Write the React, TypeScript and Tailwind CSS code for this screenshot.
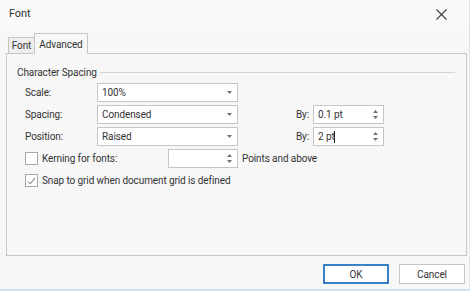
import React from "react";

const Arrow = () => (
  <svg width="5" height="3" viewBox="0 0 5 3" className="shrink-0">
    <path d="M0 0 L5 0 L2.5 3 Z" fill="#707070" />
  </svg>
);

const SpinArrows = () => (
  <div className="flex flex-col gap-[3px] items-center">
    <svg width="5" height="3" viewBox="0 0 5 3">
      <path d="M0 3 L5 3 L2.5 0 Z" fill="#707070" />
    </svg>
    <svg width="5" height="3" viewBox="0 0 5 3">
      <path d="M0 0 L5 0 L2.5 3 Z" fill="#707070" />
    </svg>
  </div>
);

const Combo = ({ value }: { value: string }) => (
  <div className="w-[141px] h-[19px] bg-white border border-[#c6c6c6] flex items-center justify-between pl-[4px] pr-[5px]">
    <span>{value}</span>
    <Arrow />
  </div>
);

const Spin = ({ value, caret, w }: { value: string; caret?: boolean; w: string }) => (
  <div className={`${w} h-[19px] bg-white border border-[#c6c6c6] flex items-center justify-between pl-[4px] pr-[5px]`}>
    <span className="flex items-center">
      {value}
      {caret && <span className="inline-block w-[1px] h-[12px] bg-[#222] ml-[-1px]" />}
    </span>
    <SpinArrows />
  </div>
);

const Check = ({ checked }: { checked?: boolean }) => (
  <div className="w-[13px] h-[13px] bg-white border border-[#a8a8a8] flex items-center justify-center">
    {checked && (
      <svg width="9" height="8" viewBox="0 0 9 8">
        <path d="M1 4.5 L3.3 6.8 L8 1" stroke="#606060" strokeWidth="1" fill="none" />
      </svg>
    )}
  </div>
);

export default function App() {
  return (
    <div
      className="w-[474px] h-[292px] bg-white text-[10px] text-[#333] overflow-hidden tracking-[-0.1px]"
      style={{ fontFamily: 'Roboto, "Noto Sans", sans-serif' }}
    >
      <div className="w-[470px] h-[291px] bg-[#f7f7f7] border-r border-[#dfe6ee] border-b-2 border-b-[#cfe0f1] flex flex-col">
        {/* title bar */}
        <div className="h-[29px] flex items-center justify-between pl-[9px] pr-[22px] bg-[#f9f9f9]">
          <span className="text-[11px] text-[#333]">Font</span>
          <svg width="11" height="11" viewBox="0 0 11 11">
            <path d="M0.5 0.5 L10.5 10.5 M10.5 0.5 L0.5 10.5" stroke="#444" strokeWidth="1.2" />
          </svg>
        </div>
        {/* tabs */}
        <div className="flex items-end pl-[8px] mt-[4px] h-[20px]">
          <div className="h-[16px] w-[26px] border border-b-0 border-r-0 border-[#c6c6c6] bg-[#eeeeee] flex items-center justify-center">
            Font
          </div>
          <div className="h-[21px] w-[54px] border border-b-0 border-[#c6c6c6] bg-[#f7f7f7] flex items-center justify-center mb-[-1px] relative z-10">
            Advanced
          </div>
        </div>
        {/* panel */}
        <div className="ml-[6px] w-[461px] h-[203px] border border-[#c6c6c6] bg-[#f7f7f7] pt-[10px] pl-[10px] pr-[11px]">
          <div className="flex items-center gap-[3px] h-[16px]">
            <span>Character Spacing</span>
            <div className="flex-1 h-px bg-[#d4d4d4]" />
          </div>
          <div className="pl-[8px] mt-[3px] flex flex-col gap-[3px]">
            <div className="flex items-center h-[19px]">
              <span className="w-[72px]">Scale:</span>
              <Combo value="100%" />
            </div>
            <div className="flex items-center h-[19px]">
              <span className="w-[72px]">Spacing:</span>
              <Combo value="Condensed" />
              <span className="w-[75px] text-right pr-[4px]">By:</span>
              <Spin value="0.1 pt" w="w-[71px]" />
            </div>
            <div className="flex items-center h-[19px]">
              <span className="w-[72px]">Position:</span>
              <Combo value="Raised" />
              <span className="w-[75px] text-right pr-[4px]">By:</span>
              <Spin value="2 pt" caret w="w-[71px]" />
            </div>
            <div className="flex items-center h-[19px]">
              <Check />
              <span className="ml-[4px] w-[126px]">Kerning for fonts:</span>
              <Spin value="" w="w-[70px]" />
              <span className="ml-[4px]">Points and above</span>
            </div>
            <div className="flex items-center h-[17px] mt-[1px]">
              <Check checked />
              <span className="ml-[4px]">Snap to grid when document grid is defined</span>
            </div>
          </div>
        </div>
        {/* buttons */}
        <div className="flex justify-end gap-[10px] pr-[4px] mt-[8px]">
          <div className="w-[66px] h-[20px] bg-white border-2 border-[#3b7fc4] flex items-center justify-center">
            OK
          </div>
          <div className="w-[66px] h-[20px] bg-white border border-[#c6c6c6] flex items-center justify-center">
            Cancel
          </div>
        </div>
      </div>
    </div>
  );
}
